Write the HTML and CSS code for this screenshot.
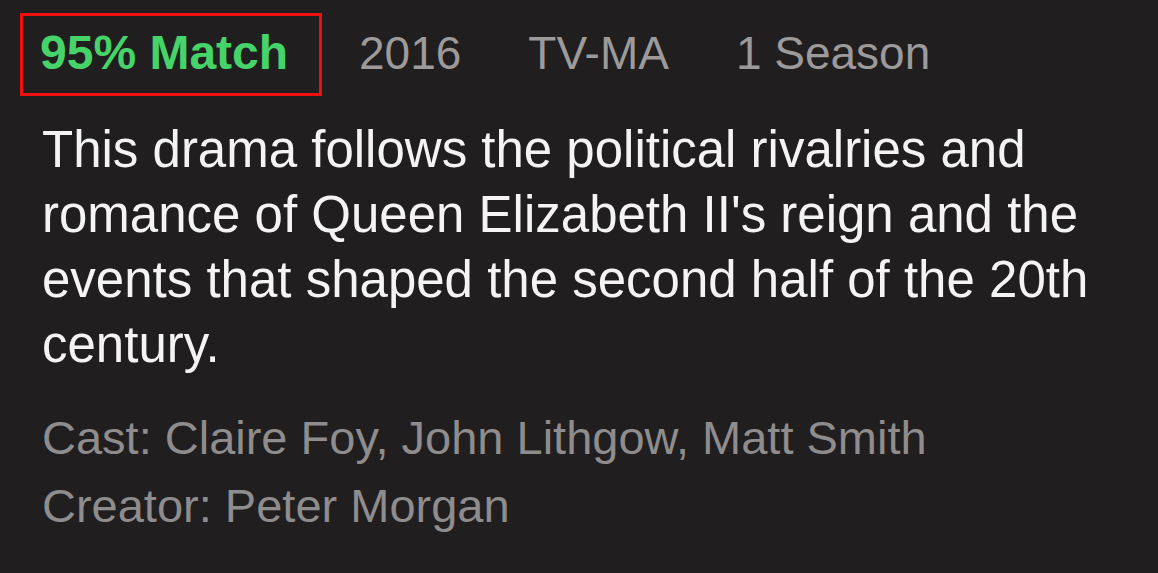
FILE: index.html
```html
<!DOCTYPE html>
<html lang="en">
<head>
  <meta charset="UTF-8">
  <title>The Crown</title>
  <meta name="viewport" content="width=device-width,initial-scale=1">
  <link rel="stylesheet" href="styles.css">
</head>
<body>
  <div class="details">
    <div class="meta">
      <span class="match">95% Match</span>
      <span class="year">2016</span>
      <span class="rating">TV-MA</span>
      <span class="seasons">1 Season</span>
    </div>

    <p class="synopsis">
      This drama follows the political rivalries and romance of Queen Elizabeth II's reign and the
      events that shaped the second half of the 20th century.
    </p>

    <p class="credit">Cast: Claire Foy, John Lithgow, Matt Smith</p>
    <p class="credit">Creator: Peter Morgan</p>
  </div>
</body>
</html>
```

FILE: styles.css
```css
html, body { margin: 0; background: #201e1f; }
body { font-family: "Liberation Sans", Arial, sans-serif; }

.details { padding: 13px 20px 0 20px; }

.meta {
  display: flex;
  align-items: baseline;
  gap: 67px;
  color: #9c9a9b;
  font-size: 46px;
}
.match {
  box-sizing: border-box;
  width: 302px;
  padding: 0 0 4px 17px;
  margin-right: -30px;
  border: 3px solid #f01010;
  color: #46d369;
  font-weight: 700;
  font-size: 48px;
  line-height: 73px;
}

.synopsis {
  margin: 21px 0 0 22px;
  color: #f4f4f4;
  font-size: 51px;
  line-height: 65px;
}

.credit {
  margin: 0 0 0 22px;
  color: #8e8c8d;
  font-size: 47px;
  line-height: 68px;
}
.synopsis + .credit { margin-top: 27px; }
```
